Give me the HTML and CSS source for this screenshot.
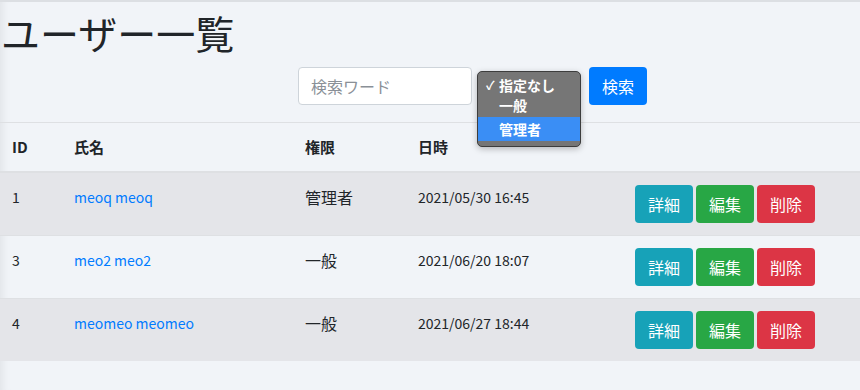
FILE: index.html
```html
<!DOCTYPE html>
<html>
<head>
    <title>ユーザー一覧</title>
    <link rel="stylesheet" href="styles.css">
</head>
<body>
    <div class="page">
        <h1>ユーザー一覧</h1>

        <form class="search">
            <input type="text" class="search-input" placeholder="検索ワード">
            <div class="select-wrap">
                <ul class="select-menu">
                    <li class="selected"><span class="check">✓</span>指定なし</li>
                    <li>一般</li>
                    <li class="hover">管理者</li>
                </ul>
            </div>
            <button type="button" class="btn btn-primary">検索</button>
        </form>

        <table class="users">
            <thead>
                <tr>
                    <th class="col-id">ID</th>
                    <th class="col-name">氏名</th>
                    <th class="col-role">権限</th>
                    <th class="col-date">日時</th>
                    <th></th>
                </tr>
            </thead>
            <tbody>
                <tr>
                    <td>1</td>
                    <td><a href="#">meoq meoq</a></td>
                    <td class="role">管理者</td>
                    <td class="date">2021/05/30 16:45</td>
                    <td>
                        <div class="actions">
                            <button class="btn btn-info">詳細</button>
                            <button class="btn btn-success">編集</button>
                            <button class="btn btn-danger">削除</button>
                        </div>
                    </td>
                </tr>
                <tr>
                    <td>3</td>
                    <td><a href="#">meo2 meo2</a></td>
                    <td class="role">一般</td>
                    <td class="date">2021/06/20 18:07</td>
                    <td>
                        <div class="actions">
                            <button class="btn btn-info">詳細</button>
                            <button class="btn btn-success">編集</button>
                            <button class="btn btn-danger">削除</button>
                        </div>
                    </td>
                </tr>
                <tr>
                    <td>4</td>
                    <td><a href="#">meomeo meomeo</a></td>
                    <td class="role">一般</td>
                    <td class="date">2021/06/27 18:44</td>
                    <td>
                        <div class="actions">
                            <button class="btn btn-info">詳細</button>
                            <button class="btn btn-success">編集</button>
                            <button class="btn btn-danger">削除</button>
                        </div>
                    </td>
                </tr>
            </tbody>
        </table>
    </div>
</body>
</html>
```

FILE: styles.css
```css
body {
    margin: 0;
    font-family: "Noto Sans CJK JP", "Noto Sans", sans-serif;
    color: #212529;
    background: #f1f4f8;
}
.page {
    min-height: 390px;
    border-top: 2px solid #dcdfe3;
    box-shadow: inset 10px 0 10px -8px rgba(0,0,0,0.08);
    box-sizing: border-box;
}
h1 {
    font-size: 39px;
    font-weight: 400;
    line-height: 1.2;
    margin: 0;
    padding: 7px 0 0 1px;
}
.search {
    display: flex;
    align-items: flex-start;
    margin: 11px 0 17px 298px;
}
.search-input {
    width: 174px;
    height: 38px;
    box-sizing: border-box;
    padding: 6px 12px;
    font-family: inherit;
    font-size: 16px;
    border: 1px solid #ced4da;
    border-radius: 4px;
    background: #fff;
}
.search-input::placeholder {
    color: #8a9097;
}
.select-wrap {
    position: relative;
    width: 104px;
    height: 38px;
    margin: 0 8px 0 5px;
}
.select-menu {
    position: absolute;
    top: 4px;
    left: 0;
    width: 104px;
    margin: 0;
    padding: 0 0 5px;
    list-style: none;
    background: #767676;
    border: 1px solid #3d3d3d;
    border-radius: 5px;
    box-shadow: 0 2px 6px rgba(0,0,0,0.25);
    box-sizing: border-box;
    overflow: hidden;
    z-index: 2;
}
.select-menu li {
    height: 24px;
    line-height: 24px;
    padding-left: 21px;
    font-size: 14px;
    font-weight: 700;
    color: #fff;
    position: relative;
}
.select-menu li.selected {
    height: 21px;
    line-height: 26px;
}
.select-menu li.hover {
    background: #3a8ef5;
}
.check {
    position: absolute;
    left: 8px;
    font-size: 12px;
}
.btn {
    display: inline-block;
    height: 38px;
    box-sizing: border-box;
    padding: 6px 12px;
    font-family: inherit;
    font-size: 16px;
    line-height: 24px;
    color: #fff;
    border: 1px solid transparent;
    border-radius: 4px;
    cursor: pointer;
}
.btn-primary { background: #007bff; }
.btn-info { background: #17a2b8; }
.btn-success { background: #28a745; }
.btn-danger { background: #dc3545; }

.users {
    width: 100%;
    border-collapse: collapse;
    font-size: 16px;
}
.users th,
.users td {
    padding: 12px;
    text-align: left;
    vertical-align: top;
    line-height: 24px;
    border-top: 1px solid #dee0e3;
}
.users th {
    font-weight: 700;
    font-size: 15px;
    border-bottom: 2px solid #dee0e3;
}
.users tbody tr:nth-child(odd) {
    background: #e4e5e9;
}
.users td {
    font-size: 14px;
}
.users td.role {
    font-size: 16px;
}
.col-id { width: 38px; }
.col-name { width: 207px; }
.col-role { width: 89px; }
.col-date { width: 193px; }
.users a {
    color: #007bff;
    text-decoration: none;
    font-size: 14px;
}
.actions {
    display: flex;
    gap: 3px;
}
```
